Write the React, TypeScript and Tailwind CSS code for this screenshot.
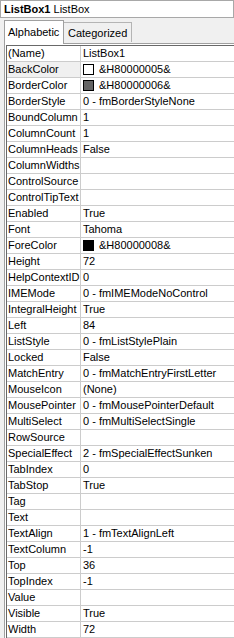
import React from "react";

type Row = { name: string; value: string; swatch?: string; sel?: boolean };

const rows: Row[] = [
  { name: "(Name)", value: "ListBox1" },
  { name: "BackColor", value: "&H80000005&", swatch: "#ffffff", sel: true },
  { name: "BorderColor", value: "&H80000006&", swatch: "#646464" },
  { name: "BorderStyle", value: "0 - fmBorderStyleNone" },
  { name: "BoundColumn", value: "1" },
  { name: "ColumnCount", value: "1" },
  { name: "ColumnHeads", value: "False" },
  { name: "ColumnWidths", value: "" },
  { name: "ControlSource", value: "" },
  { name: "ControlTipText", value: "" },
  { name: "Enabled", value: "True" },
  { name: "Font", value: "Tahoma" },
  { name: "ForeColor", value: "&H80000008&", swatch: "#000000" },
  { name: "Height", value: "72" },
  { name: "HelpContextID", value: "0" },
  { name: "IMEMode", value: "0 - fmIMEModeNoControl" },
  { name: "IntegralHeight", value: "True" },
  { name: "Left", value: "84" },
  { name: "ListStyle", value: "0 - fmListStylePlain" },
  { name: "Locked", value: "False" },
  { name: "MatchEntry", value: "0 - fmMatchEntryFirstLetter" },
  { name: "MouseIcon", value: "(None)" },
  { name: "MousePointer", value: "0 - fmMousePointerDefault" },
  { name: "MultiSelect", value: "0 - fmMultiSelectSingle" },
  { name: "RowSource", value: "" },
  { name: "SpecialEffect", value: "2 - fmSpecialEffectSunken" },
  { name: "TabIndex", value: "0" },
  { name: "TabStop", value: "True" },
  { name: "Tag", value: "" },
  { name: "Text", value: "" },
  { name: "TextAlign", value: "1 - fmTextAlignLeft" },
  { name: "TextColumn", value: "-1" },
  { name: "Top", value: "36" },
  { name: "TopIndex", value: "-1" },
  { name: "Value", value: "" },
  { name: "Visible", value: "True" },
  { name: "Width", value: "72" },
];

export default function App() {
  return (
    <div
      className="w-[234px] h-[638px] overflow-hidden bg-[#f0f0f0] text-[11px] leading-[13px] text-black"
      style={{ fontFamily: '"Liberation Sans", Arial, sans-serif' }}
    >
      {/* object selector */}
      <div className="h-[18px] bg-white border border-[#a8a8a8] flex items-center pl-[3px] whitespace-nowrap">
        <span className="font-bold">ListBox1</span>
        <span>&nbsp;ListBox</span>
      </div>
      {/* tabs */}
      <div className="h-[25px] flex items-end pl-[4px] relative">
        <div className="h-[24px] w-[60px] bg-white border border-b-0 border-[#a0a0a0] flex items-start pt-[5px] pl-[3px] relative z-10 -mb-px">
          Alphabetic
        </div>
        <div className="h-[20px] w-[68px] bg-[#f0f0f0] border border-l-0 border-b-0 border-[#b4b4b4] flex items-start pt-[4px] pl-[4px] mb-[1px]">
          Categorized
        </div>
      </div>
      {/* grid */}
      <div className="ml-[4px] border-l border-t border-[#a0a0a0] bg-white pl-px pt-px">
        <div className="border-l border-t border-[#696969]">
          {rows.map((r) => (
            <div key={r.name} className="flex h-[16px] border-b border-[#cccccc]">
              <div
                className={`w-[74px] shrink-0 pl-px border-r border-[#cccccc] flex items-center whitespace-nowrap overflow-hidden ${
                  r.sel ? "bg-[#f0f0f0]" : "bg-white"
                }`}
              >
                {r.name}
              </div>
              <div className="flex-1 flex items-center pl-[2px] whitespace-nowrap overflow-hidden">
                {r.swatch && (
                  <span
                    className="inline-block w-[11px] h-[11px] border border-black mr-[5px] shrink-0"
                    style={{ backgroundColor: r.swatch }}
                  />
                )}
                {r.value}
              </div>
            </div>
          ))}
        </div>
      </div>
    </div>
  );
}
